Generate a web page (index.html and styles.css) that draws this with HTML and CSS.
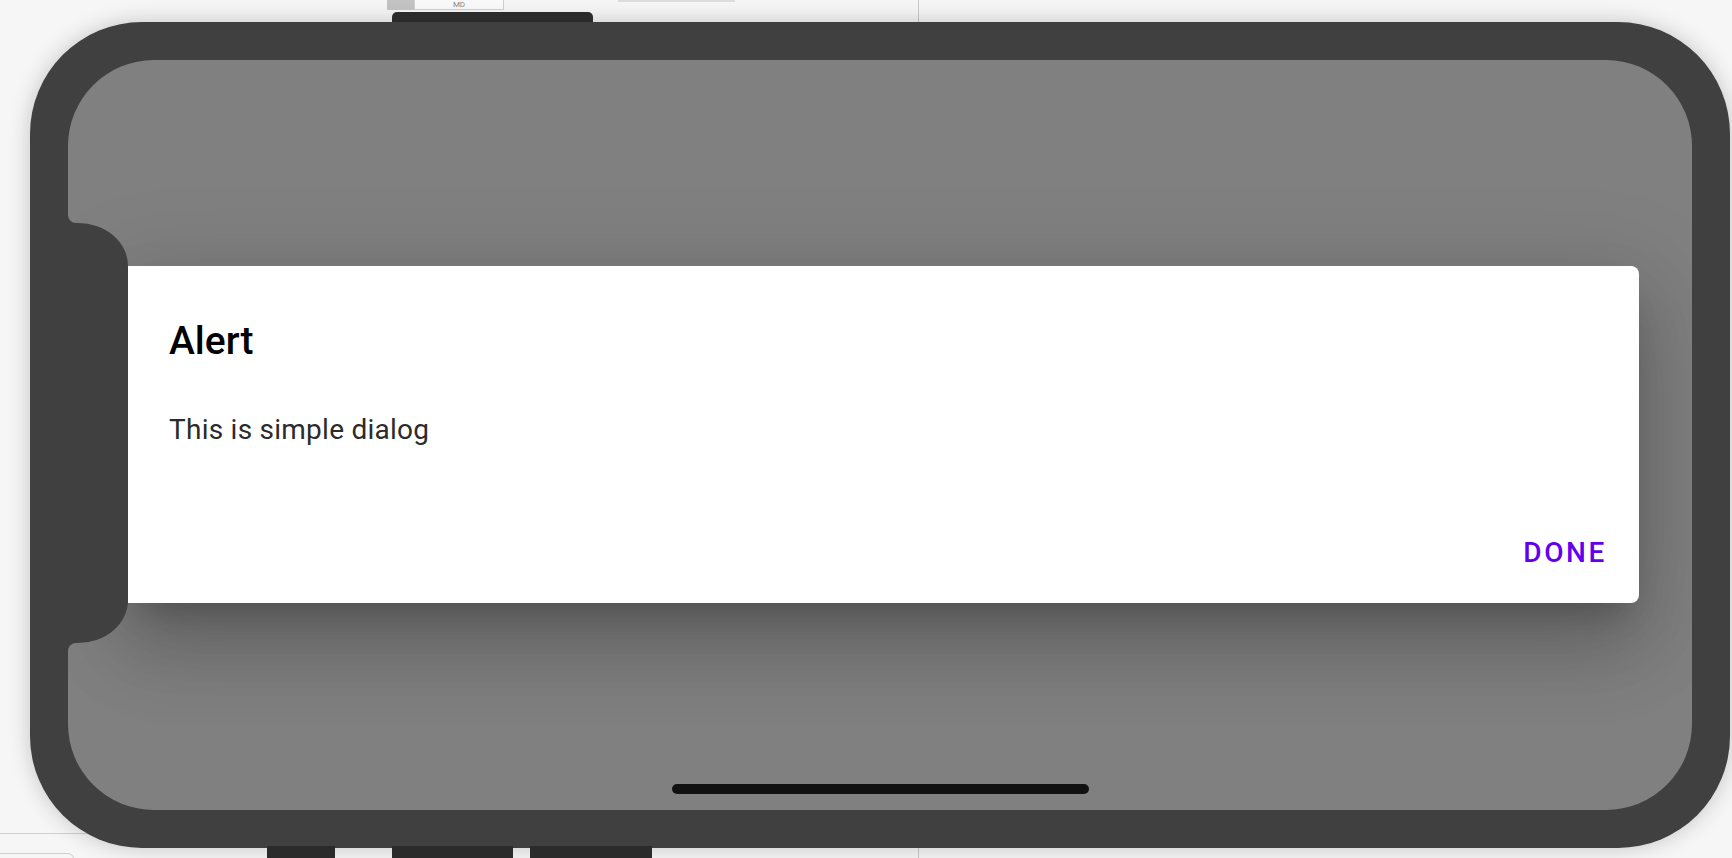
FILE: index.html
```html
<!DOCTYPE html>
<html lang="en">
<head>
  <meta charset="UTF-8">
  <title>Alert dialog</title>
  <link rel="stylesheet" href="styles.css">
</head>
<body>
<!-- desktop bits behind the simulator -->
<div class="desk-line"></div>
<div class="desk-thumb"><span class="thumb-side"></span><span class="thumb-card">MD</span></div>
<div class="desk-bar"></div>
<div class="desk-rule"></div>
<div class="desk-box"></div>

<div class="phone">
  <span class="btn btn-top"></span>
  <span class="btn btn-b1"></span>
  <span class="btn btn-b2"></span>
  <span class="btn btn-b3"></span>

  <div class="screen">
    <!-- sensor housing, landscape -->
    <svg class="notch" width="60" height="436" viewBox="0 0 60 436">
      <path d="M0,0 A8,8 0 0 0 8,8 L10,8 A50,43 0 0 1 60,51 L60,385 A50,43 0 0 1 10,428 L8,428 A8,8 0 0 0 0,436 Z" fill="#404040"/>
    </svg>

    <div class="dialog">
      <h2 class="dialog-title">Alert</h2>
      <p class="dialog-body">This is simple dialog</p>
      <div class="dialog-actions">
        <span class="btn-text">DONE</span>
      </div>
    </div>

    <span class="home-bar"></span>
  </div>
</div>
</body>
</html>
```

FILE: styles.css
```css
html, body {
  margin: 0;
  height: 858px;
  overflow: hidden;
}

body {
  position: relative;
  padding: 22px 0 0 30px;
  box-sizing: border-box;
  background-color: #f6f6f6;
  font-family: Roboto, "Liberation Sans", sans-serif;
}

/* desktop */
.desk-line {
  position: absolute;
  left: 918px;
  top: 0;
  width: 1px;
  height: 858px;
  background-color: #c9c9c9;
}

.desk-thumb {
  position: absolute;
  left: 387px;
  top: 0;
  height: 10px;
  display: flex;
}

.thumb-side {
  width: 27px;
  background-color: #c4c4c4;
}

.thumb-card {
  width: 88px;
  background-color: #fafafa;
  border: 1px solid #d0d0d0;
  border-top: 0;
  font-size: 8px;
  line-height: 9px;
  color: #888;
  text-align: center;
  overflow: hidden;
}

.desk-bar {
  position: absolute;
  left: 618px;
  top: 0;
  width: 117px;
  height: 2px;
  background-color: #dedede;
}

.desk-rule {
  position: absolute;
  left: 0;
  top: 833px;
  width: 90px;
  height: 1px;
  background-color: #cfcfcf;
}

.desk-box {
  position: absolute;
  left: -10px;
  top: 853px;
  width: 82px;
  height: 20px;
  border: 1px solid #cdcdcd;
  border-radius: 6px;
}

/* device */
.phone {
  position: relative;
  width: 1700px;
  height: 826px;
  padding: 38px;
  box-sizing: border-box;
  background-color: #404040;
  border-radius: 112px;
  box-shadow: 0 0 22px rgba(0, 0, 0, 0.2);
}

.btn {
  position: absolute;
  background-color: #2b2b2b;
}

.btn-top {
  left: 362px;
  top: -10px;
  width: 201px;
  height: 10px;
  border-radius: 5px 5px 0 0;
}

.btn-b1, .btn-b2, .btn-b3 {
  top: 824px;
  height: 16px;
  border-radius: 0 0 5px 5px;
}

.btn-b1 { left: 237px; width: 68px; }
.btn-b2 { left: 362px; width: 121px; }
.btn-b3 { left: 500px; width: 122px; }

.screen {
  position: relative;
  height: 100%;
  display: flex;
  align-items: center;
  overflow: hidden;
  background-color: #808080;
  border-radius: 86px;
}

.notch {
  position: absolute;
  left: 0;
  top: 155px;
  z-index: 2;
}

.home-bar {
  position: absolute;
  left: 604px;
  bottom: 16px;
  width: 417px;
  height: 10px;
  border-radius: 5px;
  background-color: #111;
}

/* dialog */
.dialog {
  display: flex;
  flex-direction: column;
  width: 1511px;
  height: 337px;
  margin-left: 60px;
  margin-top: -1px;
  padding: 52px 32px 33px 41px;
  box-sizing: border-box;
  background-color: #fff;
  border-radius: 0 8px 8px 0;
  box-shadow: 0 22px 30px -14px rgba(0, 0, 0, 0.2),
              0 48px 76px 6px rgba(0, 0, 0, 0.14),
              0 18px 92px 16px rgba(0, 0, 0, 0.12);
}

.dialog-title {
  margin: 0;
  font-size: 39px;
  line-height: 46px;
  font-weight: 500;
  color: #000;
}

.dialog-body {
  margin: 49px 0 0;
  font-size: 28px;
  line-height: 34px;
  letter-spacing: 0.25px;
  color: #2b2b2b;
}

.dialog-actions {
  margin-top: auto;
  display: flex;
  justify-content: flex-end;
}

.btn-text {
  font-size: 28px;
  line-height: 34px;
  font-weight: 500;
  letter-spacing: 2.6px;
  color: #6200ee;
}
```
